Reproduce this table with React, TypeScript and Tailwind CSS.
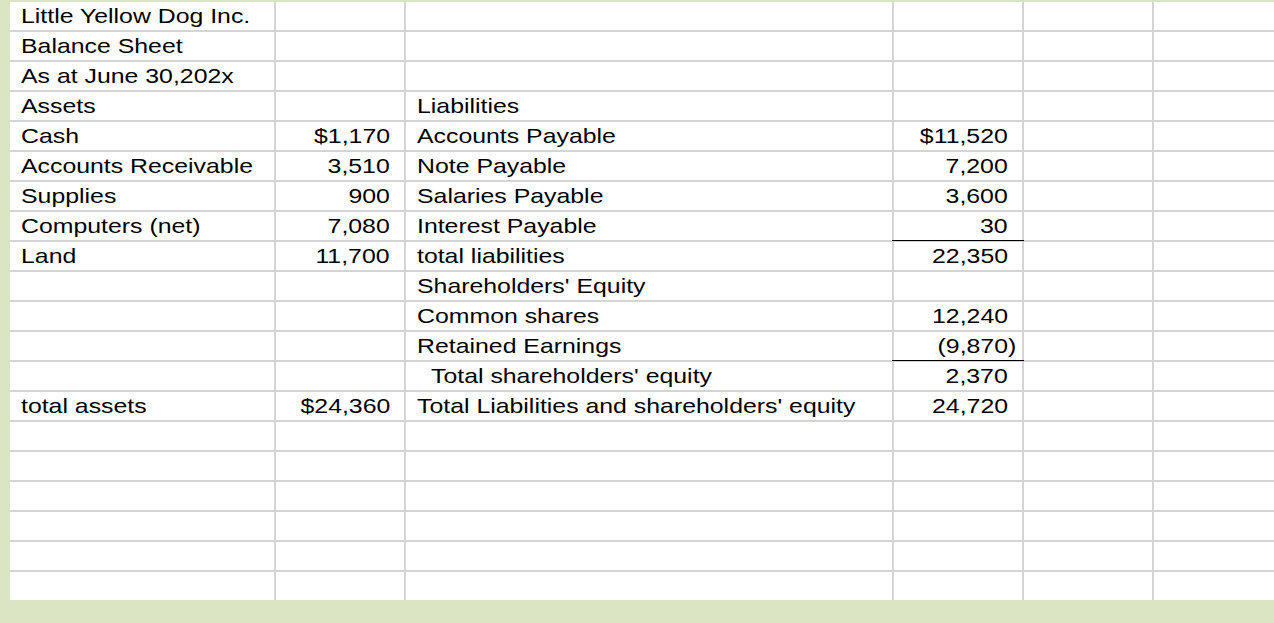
import React from "react";

type Row = {
  a?: string;
  b?: string;
  c?: string;
  cIndent?: boolean;
  d?: string;
  dParen?: boolean;
  dUnderline?: boolean;
};

const rows: Row[] = [
  { a: "Little Yellow Dog Inc." },
  { a: "Balance Sheet" },
  { a: "As at June 30,202x" },
  { a: "Assets", c: "Liabilities" },
  { a: "Cash", b: "$1,170", c: "Accounts Payable", d: "$11,520" },
  { a: "Accounts Receivable", b: "3,510", c: "Note Payable", d: "7,200" },
  { a: "Supplies", b: "900", c: "Salaries Payable", d: "3,600" },
  { a: "Computers (net)", b: "7,080", c: "Interest Payable", d: "30", dUnderline: true },
  { a: "Land", b: "11,700", c: "total liabilities", d: "22,350" },
  { c: "Shareholders' Equity" },
  { c: "Common shares", d: "12,240" },
  { c: "Retained Earnings", d: "(9,870)", dParen: true, dUnderline: true },
  { c: "Total shareholders' equity", cIndent: true, d: "2,370" },
  { a: "total assets", b: "$24,360", c: "Total Liabilities and shareholders' equity", d: "24,720" },
  {},
  {},
  {},
  {},
  {},
  {},
];

function LeftText({ text }: { text?: string }) {
  if (!text) return null;
  return (
    <span className="inline-block origin-left scale-x-[1.225] whitespace-nowrap">{text}</span>
  );
}

function RightText({ text }: { text?: string }) {
  if (!text) return null;
  return (
    <span className="inline-block origin-right scale-x-[1.225] whitespace-nowrap">{text}</span>
  );
}

export default function App() {
  return (
    <div
      className="w-[1274px] h-[623px] bg-[#dbe4c3] pl-[10px] pt-[2px] overflow-hidden text-black"
      style={{ fontFamily: '"Liberation Sans", Arial, sans-serif' }}
    >
      <div className="grid grid-cols-[264px_128px_486px_128px_128px_1fr] auto-rows-[28px] gap-[2px] bg-[#d4d4d4] text-[20.3px] leading-[28px]">
        {rows.map((r, i) => (
          <React.Fragment key={i}>
            <div className="bg-white pl-[11px]">
              <LeftText text={r.a} />
            </div>
            <div className="bg-white pr-[14px] text-right">
              <RightText text={r.b} />
            </div>
            <div className={`bg-white ${r.cIndent ? "pl-[25px]" : "pl-[11px]"}`}>
              <LeftText text={r.c} />
            </div>
            <div className={`relative bg-white text-right ${r.dParen ? "pr-[6px]" : "pr-[14px]"}`}>
              <RightText text={r.d} />
              {r.dUnderline && (
                <span className="absolute left-[-2px] right-[-2px] bottom-[-1px] h-px bg-black" />
              )}
            </div>
            <div className="bg-white" />
            <div className="bg-white" />
          </React.Fragment>
        ))}
      </div>
    </div>
  );
}
